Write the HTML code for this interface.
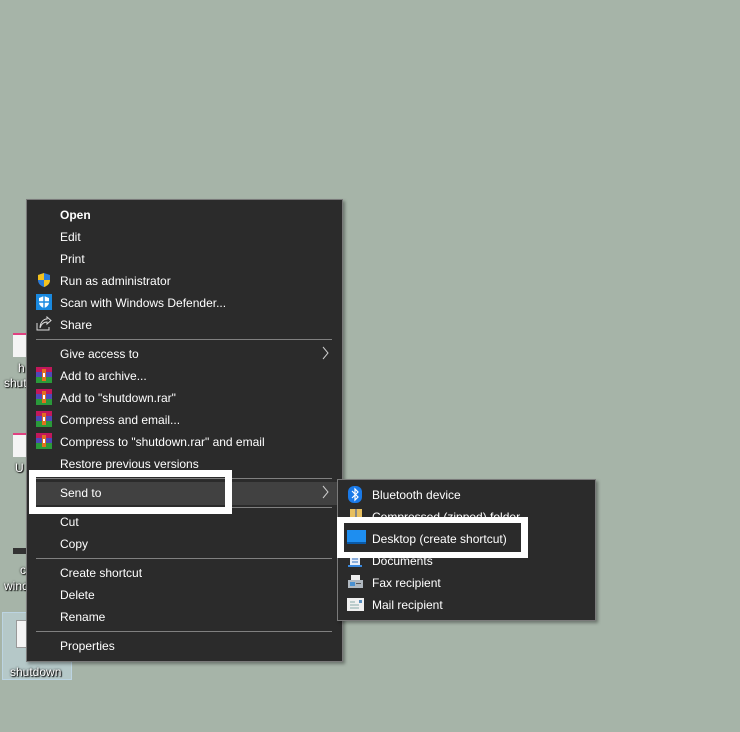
<!DOCTYPE html>
<html><head><meta charset="utf-8"><style>
*{margin:0;padding:0;box-sizing:border-box}
body{width:740px;height:732px;overflow:hidden;background:#a6b4a8;font-family:"Liberation Sans",sans-serif;font-size:12px;color:#fff;position:relative}
.a{position:absolute}
.menu{background:#2b2b2b;border:1px solid #7a7a7a;box-shadow:2px 2px 3px rgba(0,0,0,.35)}
.t{position:absolute;white-space:nowrap;line-height:14px}
.sep{position:absolute;height:1px;background:#808080}
.ic{position:absolute}
.lbl{position:absolute;color:#fff;font-size:12px;text-shadow:1px 1px 1px #000,0 0 2px #000;white-space:nowrap}
</style></head><body>

<!-- desktop icons (partially hidden) -->
<div class="a" style="left:13px;top:333px;width:13px;height:24px;background:#f4f4f4;border-top:2px solid #e04080"></div>
<div class="lbl" style="left:18px;top:361px">h</div>
<div class="lbl" style="left:4px;top:376px">shut</div>
<div class="a" style="left:13px;top:433px;width:13px;height:24px;background:#f4f4f4;border-top:2px solid #e04080"></div>
<div class="lbl" style="left:15px;top:461px">U</div>
<div class="a" style="left:13px;top:548px;width:13px;height:6px;background:#333"></div>
<div class="lbl" style="left:20px;top:563px">c</div>
<div class="lbl" style="left:4px;top:579px">wind</div>
<div class="a" style="left:2px;top:612px;width:70px;height:68px;background:rgba(200,225,240,.45);border:1px solid #bcd4e2"></div>
<div class="a" style="left:16px;top:620px;width:12px;height:28px;background:#f4f4f4;border:1px solid #999"></div>
<div class="lbl" style="left:10px;top:665px">shutdown</div>

<!-- main menu -->
<div class="a menu" style="left:26px;top:199px;width:317px;height:463px"></div>
<div class="a" style="left:36px;top:482px;width:302px;height:23px;background:#414141"></div>

<div class="t" style="left:60px;top:208px;font-weight:bold">Open</div>
<div class="t" style="left:60px;top:230px">Edit</div>
<div class="t" style="left:60px;top:252px">Print</div>
<div class="t" style="left:60px;top:274px">Run as administrator</div>
<div class="t" style="left:60px;top:296px">Scan with Windows Defender...</div>
<div class="t" style="left:60px;top:318px">Share</div>
<div class="sep" style="left:36px;top:339px;width:296px"></div>
<div class="t" style="left:60px;top:347px">Give access to</div>
<div class="t" style="left:60px;top:369px">Add to archive...</div>
<div class="t" style="left:60px;top:391px">Add to "shutdown.rar"</div>
<div class="t" style="left:60px;top:413px">Compress and email...</div>
<div class="t" style="left:60px;top:435px">Compress to "shutdown.rar" and email</div>
<div class="t" style="left:60px;top:457px">Restore previous versions</div>
<div class="sep" style="left:36px;top:478px;width:296px"></div>
<div class="t" style="left:60px;top:486px">Send to</div>
<div class="sep" style="left:36px;top:507px;width:296px"></div>
<div class="t" style="left:60px;top:515px">Cut</div>
<div class="t" style="left:60px;top:537px">Copy</div>
<div class="sep" style="left:36px;top:558px;width:296px"></div>
<div class="t" style="left:60px;top:566px">Create shortcut</div>
<div class="t" style="left:60px;top:588px">Delete</div>
<div class="t" style="left:60px;top:610px">Rename</div>
<div class="sep" style="left:36px;top:631px;width:296px"></div>
<div class="t" style="left:60px;top:639px">Properties</div>

<!-- arrows -->
<svg class="ic" style="left:322px;top:346px" width="8" height="14"><path d="M1 1 L6 7 L1 13" stroke="#ccc" fill="none" stroke-width="1"/></svg>
<svg class="ic" style="left:322px;top:485px" width="8" height="14"><path d="M1 1 L6 7 L1 13" stroke="#ccc" fill="none" stroke-width="1"/></svg>

<!-- icons -->
<svg class="ic" style="left:36px;top:272px" width="16" height="16"><path d="M8 1 L14 3 V8 C14 12 11 14 8 15 C5 14 2 12 2 8 V3 Z" fill="#2a7bd8"/><path d="M8 1 V8 H2 V3 Z" fill="#f3c11c"/><path d="M8 8 H14 C14 12 11 14 8 15 Z" fill="#f3c11c"/></svg>
<svg class="ic" style="left:36px;top:294px" width="16" height="16"><rect width="16" height="16" fill="#1a8ae0"/><path d="M8 2 L13 4 V8 C13 11 11 13 8 14 C5 13 3 11 3 8 V4 Z" fill="#fff"/><path d="M8 2 V14 M3 8 H13" stroke="#1a8ae0" stroke-width="1.4"/></svg>
<svg class="ic" style="left:36px;top:316px" width="16" height="16"><path d="M1 7 V14 H13 V11" stroke="#ddd" fill="none"/><path d="M4 12 C5 8 8 6 11 6 V8 L15 4.5 L11 1 V3 C7 3 4 7 4 12Z" stroke="#ddd" fill="none"/></svg>
<svg class="ic" style="left:36px;top:367px" width="16" height="16" id="rar"><rect x="0" y="0" width="16" height="5" fill="#c2185b"/><rect x="0" y="5" width="16" height="5" fill="#5048b8"/><rect x="0" y="10" width="16" height="6" fill="#2a9a3a"/><rect x="6" y="2" width="4" height="12" fill="#e07020"/><rect x="7" y="6" width="2" height="4" fill="#fff"/></svg>
<svg class="ic" style="left:36px;top:389px" width="16" height="16"><rect x="0" y="0" width="16" height="5" fill="#c2185b"/><rect x="0" y="5" width="16" height="5" fill="#5048b8"/><rect x="0" y="10" width="16" height="6" fill="#2a9a3a"/><rect x="6" y="2" width="4" height="12" fill="#e07020"/><rect x="7" y="6" width="2" height="4" fill="#fff"/></svg>
<svg class="ic" style="left:36px;top:411px" width="16" height="16"><rect x="0" y="0" width="16" height="5" fill="#c2185b"/><rect x="0" y="5" width="16" height="5" fill="#5048b8"/><rect x="0" y="10" width="16" height="6" fill="#2a9a3a"/><rect x="6" y="2" width="4" height="12" fill="#e07020"/><rect x="7" y="6" width="2" height="4" fill="#fff"/></svg>
<svg class="ic" style="left:36px;top:433px" width="16" height="16"><rect x="0" y="0" width="16" height="5" fill="#c2185b"/><rect x="0" y="5" width="16" height="5" fill="#5048b8"/><rect x="0" y="10" width="16" height="6" fill="#2a9a3a"/><rect x="6" y="2" width="4" height="12" fill="#e07020"/><rect x="7" y="6" width="2" height="4" fill="#fff"/></svg>

<!-- send to white box -->
<div class="a" style="left:29px;top:470px;width:203px;height:44px;border:7px solid #fff"></div>

<!-- submenu -->
<div class="a menu" style="left:337px;top:479px;width:259px;height:142px"></div>
<div class="t" style="left:372px;top:488px">Bluetooth device</div>
<div class="t" style="left:372px;top:510px">Compressed (zipped) folder</div>
<div class="t" style="left:372px;top:554px">Documents</div>
<div class="t" style="left:372px;top:576px">Fax recipient</div>
<div class="t" style="left:372px;top:598px">Mail recipient</div>
<svg class="ic" style="left:348px;top:486px" width="14" height="17"><rect width="14" height="17" rx="6" fill="#1a7ae8"/><path d="M4 5 L10 11 L7 14 V3 L10 6 L4 12" stroke="#fff" fill="none" stroke-width="1.2"/></svg>
<svg class="ic" style="left:348px;top:508px" width="16" height="16"><rect x="2" y="1" width="12" height="14" fill="#e8c060"/><rect x="7" y="1" width="2" height="10" fill="#888"/></svg>
<svg class="ic" style="left:347px;top:552px" width="16" height="16"><rect x="3" y="1" width="10" height="12" fill="#e8eef8"/><path d="M5 4 H11 M5 7 H11 M5 10 H11" stroke="#3070c0"/><rect x="1" y="13" width="14" height="2" fill="#3a8ae0"/></svg>
<svg class="ic" style="left:347px;top:574px" width="17" height="16"><rect x="4" y="1" width="9" height="5" fill="#eee"/><rect x="1" y="6" width="15" height="8" fill="#b0b8c0"/><rect x="3" y="8" width="5" height="4" fill="#4a90d0"/><rect x="9" y="9" width="5" height="1" fill="#555"/></svg>
<svg class="ic" style="left:347px;top:598px" width="17" height="13"><rect width="17" height="13" fill="#f0f0f0"/><path d="M3 4 H8 M3 7 H12 M3 10 H12" stroke="#8aa"/><rect x="12" y="2" width="3" height="3" fill="#5a90c0"/></svg>

<!-- desktop highlighted box -->
<div class="a" style="left:337px;top:517px;width:191px;height:41px;background:#fff"></div>
<div class="a" style="left:344px;top:523px;width:177px;height:29px;background:#2b2b2b"></div>
<svg class="ic" style="left:347px;top:530px" width="19" height="15"><rect x="0" y="0" width="19" height="13" fill="#1e8ef0"/><rect x="0" y="12" width="19" height="2" fill="#0a5aa8"/></svg>
<div class="t" style="left:372px;top:532px">Desktop (create shortcut)</div>

</body></html>
